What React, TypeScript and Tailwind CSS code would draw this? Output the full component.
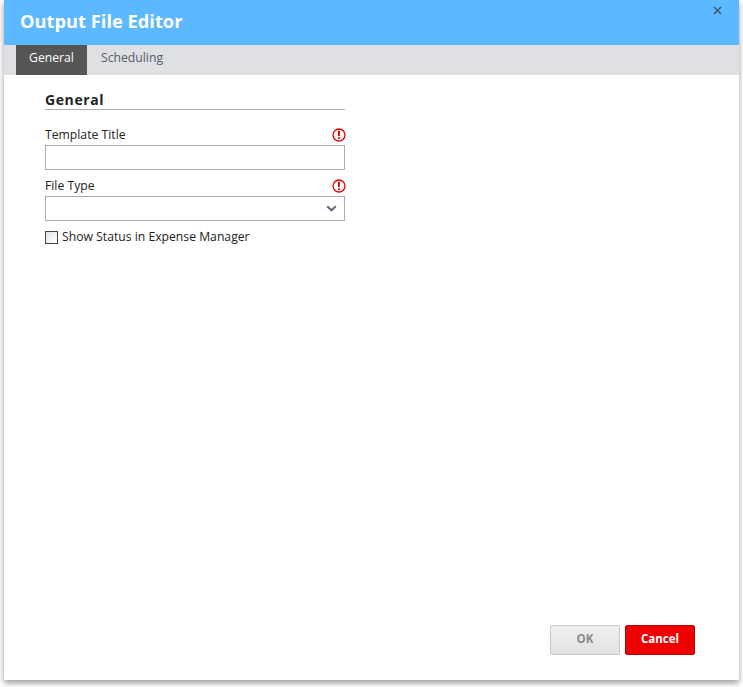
import React from 'react';

const font = { fontFamily: '"Open Sans", "Noto Sans", sans-serif' };

// red circled exclamation shown next to required fields
function RequiredIcon() {
    return (
        <svg width="14" height="14" viewBox="0 0 14 14" fill="none" className="relative left-[0.5px]">
            <circle cx="7" cy="7" r="6" stroke="#e60000" strokeWidth="1.3" />
            <path d="M7 2.8V8" stroke="#e60000" strokeWidth="1.9" />
            <path d="M7 9.2V11.1" stroke="#e60000" strokeWidth="1.9" />
        </svg>
    );
}

function FieldLabel({ text }: { text: string }) {
    return (
        <div className="flex h-[20px] items-center justify-between">
            <span className="text-[12.2px] leading-[20px] text-[#222]">{text}</span>
            <RequiredIcon />
        </div>
    );
}

export default function App() {
    return (
        <div className="h-[687px] w-[743px] overflow-hidden bg-white pl-[4px]" style={font}>
            <div className="flex h-[680px] w-[735px] flex-col bg-white shadow-[0_3px_6px_rgba(0,0,0,0.4)]">
                {/* Header */}
                <div className="relative flex h-[45px] shrink-0 items-start bg-[#5cb8ff] pl-[16px] pt-[8px]">
                    <h1 className="text-[18.3px] font-bold leading-[26px] text-white">Output File Editor</h1>
                    <svg className="absolute right-[17px] top-[6px]" width="9" height="9" viewBox="0 0 9 9" fill="none">
                        <path d="M1 1L8 8M8 1L1 8" stroke="#44566c" strokeWidth="1.5" />
                    </svg>
                </div>

                {/* Tabs */}
                <div className="flex h-[30px] shrink-0 bg-[#dfe0e4] pl-[12px]">
                    <div className="flex w-[71px] justify-center bg-[#555555] pt-[4px] text-[12.2px] leading-[18px] text-white">General</div>
                    <div className="flex w-[89px] justify-center pl-[1px] pt-[4px] text-[12.2px] leading-[18px] text-[#555b66]">Scheduling</div>
                </div>

                {/* Form */}
                <div className="flex flex-1 flex-col justify-between">
                    <div className="ml-[41px] w-[300px] pt-[15px]">
                        <h2 className="box-content h-[19px] border-b border-[#b0b0b8] text-[14px] font-bold leading-[20px] tracking-[0.6px] text-[#222]">General</h2>
                        <div className="mt-[15px]">
                            <FieldLabel text="Template Title" />
                            <div className="h-[25px] border border-[#a9aeb4] bg-white" />
                        </div>
                        <div className="mt-[6px]">
                            <FieldLabel text="File Type" />
                            <div className="flex h-[25px] items-center justify-end border border-[#a9aeb4] bg-white pr-[7px]">
                                <svg width="11" height="7" viewBox="0 0 11 7" fill="none">
                                    <path d="M1.2 1.2L5.5 5.3L9.8 1.2" stroke="#5d6b7c" strokeWidth="2" />
                                </svg>
                            </div>
                        </div>
                        <label className="mt-[8px] flex items-center gap-[4px]">
                            <span className="h-[13px] w-[13px] border border-[#444] bg-gradient-to-br from-[#e4e4e4] to-white" />
                            <span className="text-[12.2px] leading-[16px] text-[#222]">Show Status in Expense Manager</span>
                        </label>
                    </div>

                    {/* Footer buttons */}
                    <div className="flex justify-end gap-[5px] pb-[25px] pr-[44px]">
                        <button className="h-[30px] w-[70px] rounded-[2px] border border-[#c8c8c8] bg-gradient-to-b from-[#f0f0f0] to-[#e2e2e2] pb-[2px] text-[11.5px] font-bold text-[#8a8a8a]">OK</button>
                        <button className="h-[30px] w-[70px] rounded-[2px] border border-[#b80000] bg-[#ee0000] pb-[2px] text-[11.5px] font-bold text-white">Cancel</button>
                    </div>
                </div>
            </div>
        </div>
    );
}
